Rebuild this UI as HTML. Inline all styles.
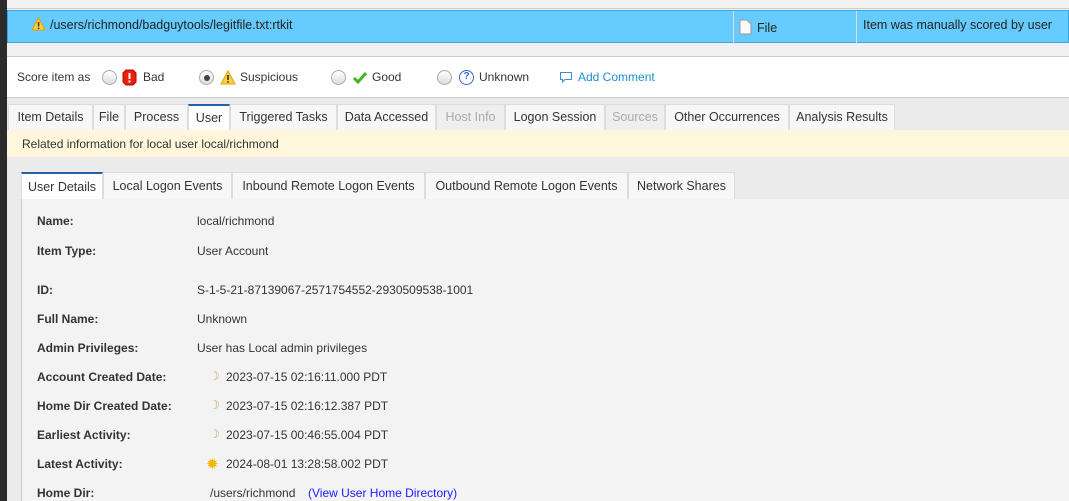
<!DOCTYPE html>
<html><head><meta charset="utf-8"><style>
*{margin:0;padding:0;box-sizing:border-box}
body{width:1069px;height:501px;overflow:hidden;background:#f0f0f0;font-family:"Liberation Sans",sans-serif;font-size:12px;color:#333;position:relative}
.a{position:absolute;white-space:nowrap}
.tab{position:absolute;top:104px;height:26px;background:#f7f7f7;border:1px solid #ddd;border-bottom:none;line-height:25px;text-align:center;font-size:12.5px;color:#333}
.st{position:absolute;top:172px;height:27px;background:#f7f7f7;border:1px solid #ddd;border-bottom:none;line-height:27px;text-align:center;font-size:12.5px;color:#333}
.lab{position:absolute;left:37px;font-weight:bold;color:#333;font-size:12px}
.val{position:absolute;left:197px;color:#333;font-size:12px}
.radio{position:absolute;top:70px;width:15px;height:15px;border-radius:50%;border:1px solid #aaa;background:linear-gradient(#fff,#ddd)}
</style></head><body>
<div class="a" style="left:0;top:0;width:7px;height:501px;background:#2b2b2b"></div>
<div class="a" style="left:7px;top:0;width:1062px;height:9px;background:#f2f2f2;border-bottom:1px solid #ccc"></div>
<div class="a" style="left:7px;top:10px;width:1062px;height:33px;background:#66ccff;border:1px solid #3aa6e0"></div>
<div class="a" style="left:733px;top:11px;width:1px;height:46px;background:#ddd"></div>
<div class="a" style="left:856px;top:11px;width:1px;height:46px;background:#ddd"></div>
<svg class="a" style="left:31px;top:17px" width="15" height="14" viewBox="0 0 15 14"><path d="M7.5 1L14 13H1Z" fill="#ffd23c" stroke="#e0a000"/><rect x="6.8" y="5" width="1.5" height="4.5" fill="#333"/><rect x="6.8" y="10.5" width="1.5" height="1.5" fill="#333"/></svg>
<div class="a" style="left:50px;top:18px;font-size:12.5px;color:#222">/users/richmond/badguytools/legitfile.txt:rtkit</div>
<svg class="a" style="left:739px;top:19px" width="13" height="16" viewBox="0 0 13 16"><path d="M1 1H8L12 5V15H1Z" fill="#fafafa" stroke="#999"/></svg>
<div class="a" style="left:757px;top:21px;font-size:12.5px;color:#222">File</div>
<div class="a" style="left:863px;top:18px;font-size:12.5px;color:#222">Item was manually scored by user</div>
<div class="a" style="left:7px;top:43px;width:1062px;height:14px;background:#f0f0f0;border-bottom:1px solid #ccc"></div>
<div class="a" style="left:7px;top:57px;width:1062px;height:41px;background:#fff;border-bottom:1px solid #ccc"></div>
<div class="a" style="left:17px;top:70px;color:#333">Score item as</div>
<div class="radio" style="left:102px"></div>
<svg class="a" style="left:122px;top:69px" width="15" height="17" viewBox="0 0 15 17"><path d="M4 1H11L14 4V13L11 16H4L1 13V4Z" fill="#e8200e" stroke="#b00"/><rect x="6.5" y="4" width="2" height="6" fill="#fff"/><rect x="6.5" y="11.5" width="2" height="2" fill="#fff"/></svg>
<div class="a" style="left:143px;top:70px">Bad</div>
<div class="radio" style="left:199px"></div><div class="a" style="left:203.5px;top:74.5px;width:6px;height:6px;border-radius:50%;background:#444"></div>
<svg class="a" style="left:220px;top:70px" width="16" height="15" viewBox="0 0 16 15"><path d="M8 1L15 14H1Z" fill="#ffd23c" stroke="#e0a000"/><rect x="7.2" y="5" width="1.6" height="5" fill="#333"/><rect x="7.2" y="11" width="1.6" height="1.6" fill="#333"/></svg>
<div class="a" style="left:240px;top:70px">Suspicious</div>
<div class="radio" style="left:331px"></div>
<svg class="a" style="left:352px;top:71px" width="16" height="14" viewBox="0 0 16 14"><path d="M2 7L6 11L14 2" fill="none" stroke="#3cb81e" stroke-width="3"/></svg>
<div class="a" style="left:372px;top:70px">Good</div>
<div class="radio" style="left:437px"></div>
<div class="a" style="left:459px;top:70px;width:15px;height:15px;border-radius:50%;border:1.5px solid #3366cc;color:#3366cc;font-size:10px;font-weight:bold;text-align:center;line-height:12px">?</div>
<div class="a" style="left:479px;top:70px">Unknown</div>
<svg class="a" style="left:559px;top:71px" width="14" height="13" viewBox="0 0 14 13"><path d="M1.5 1.5H12.5V8.5H6L3.5 11V8.5H1.5Z" fill="#fff" stroke="#3a8fd0"/></svg>
<div class="a" style="left:578px;top:70px;color:#1a8fd0">Add Comment</div>
<div class="a" style="left:7px;top:98px;width:1062px;height:403px;background:#ebebeb"></div>
<div class="tab" style="left:8px;width:85px">Item Details</div>
<div class="tab" style="left:93px;width:32px">File</div>
<div class="tab" style="left:125px;width:63px">Process</div>
<div class="tab" style="left:188px;width:42px;background:#fff;border-top:2px solid #2a5ea8">User</div>
<div class="tab" style="left:230px;width:107px">Triggered Tasks</div>
<div class="tab" style="left:337px;width:99px">Data Accessed</div>
<div class="tab" style="left:436px;width:69px;background:#eee;color:#aaa">Host Info</div>
<div class="tab" style="left:505px;width:100px">Logon Session</div>
<div class="tab" style="left:605px;width:60px;background:#eee;color:#aaa">Sources</div>
<div class="tab" style="left:665px;width:124px">Other Occurrences</div>
<div class="tab" style="left:789px;width:106px">Analysis Results</div>
<div class="a" style="left:7px;top:130px;width:1062px;height:27px;background:#fff7dc"></div>
<div class="a" style="left:22px;top:137px;color:#333">Related information for local user local/richmond</div>
<div class="st" style="left:21px;width:82px;background:#fff;border-top:2px solid #2a5ea8">User Details</div>
<div class="st" style="left:103px;width:129px">Local Logon Events</div>
<div class="st" style="left:232px;width:193px">Inbound Remote Logon Events</div>
<div class="st" style="left:425px;width:203px">Outbound Remote Logon Events</div>
<div class="st" style="left:628px;width:107px">Network Shares</div>
<div class="a" style="left:21px;top:199px;width:1048px;height:302px;background:#f3f3f3;border-left:1px solid #ccc"></div>
<div class="lab" style="top:214px">Name:</div><div class="val" style="top:214px">local/richmond</div>
<div class="lab" style="top:244px">Item Type:</div><div class="val" style="top:244px">User Account</div>
<div class="lab" style="top:283px">ID:</div><div class="val" style="top:283px">S-1-5-21-87139067-2571754552-2930509538-1001</div>
<div class="lab" style="top:312px">Full Name:</div><div class="val" style="top:312px">Unknown</div>
<div class="lab" style="top:341px">Admin Privileges:</div><div class="val" style="top:341px">User has Local admin privileges</div>
<div class="lab" style="top:370px">Account Created Date:</div><div class="a" style="left:209px;top:369px;color:#c9a66b;font-size:12px">☽</div><div class="val" style="left:226px;top:370px">2023-07-15 02:16:11.000 PDT</div>
<div class="lab" style="top:399px">Home Dir Created Date:</div><div class="a" style="left:209px;top:398px;color:#c9a66b;font-size:12px">☽</div><div class="val" style="left:226px;top:399px">2023-07-15 02:16:12.387 PDT</div>
<div class="lab" style="top:428px">Earliest Activity:</div><div class="a" style="left:209px;top:427px;color:#c9a66b;font-size:12px">☽</div><div class="val" style="left:226px;top:428px">2023-07-15 00:46:55.004 PDT</div>
<div class="lab" style="top:457px">Latest Activity:</div><div class="a" style="left:206px;top:455px;color:#f5b800;font-size:15px">✹</div><div class="val" style="left:226px;top:457px">2024-08-01 13:28:58.002 PDT</div>
<div class="lab" style="top:486px">Home Dir:</div><div class="val" style="left:210px;top:486px">/users/richmond</div><div class="a" style="left:308px;top:486px;color:#1a1aff">(View User Home Directory)</div>
</body></html>
